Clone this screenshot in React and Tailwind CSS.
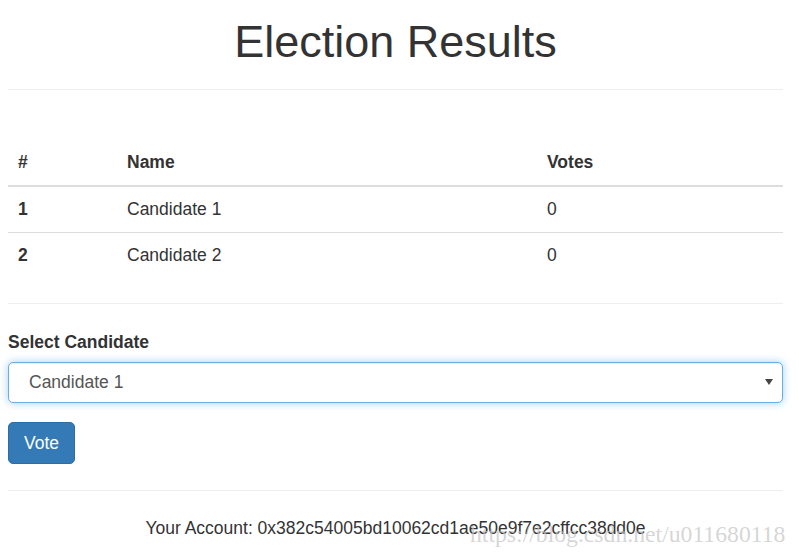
const candidates = [
  { id: 1, name: 'Candidate 1', votes: 0 },
  { id: 2, name: 'Candidate 2', votes: 0 },
];

const App = () => {
  return (
    <div className="relative min-h-[555px] w-[799px] overflow-hidden bg-white text-[#333] font-['Liberation_Sans',Arial,sans-serif] text-[17.5px] leading-[25px]">
      <div className="ml-2 w-[775px]">
        <h1 className="pt-[17px] text-center text-[45px] leading-[50px] font-normal">Election Results</h1>
        <hr className="mt-[22px] border-0 border-t border-[#eee]" />

        {/* Results table */}
        <div className="mt-[50px]">
          <div className="grid grid-cols-[109px_420px_246px] h-[47px] items-center border-b-2 border-[#ddd] font-bold">
            <div className="px-[10px]">#</div>
            <div className="px-[10px]">Name</div>
            <div className="px-[10px]">Votes</div>
          </div>
          {candidates.map((c, i) => (
            <div
              key={c.id}
              className={`grid grid-cols-[109px_420px_246px] items-center ${i > 0 ? 'h-[46px] border-t border-[#ddd]' : 'h-[45px]'}`}
            >
              <div className="px-[10px] font-bold">{c.id}</div>
              <div className="px-[10px]">{c.name}</div>
              <div className="px-[10px]">{c.votes}</div>
            </div>
          ))}
        </div>

        <hr className="mt-[25px] border-0 border-t border-[#eee]" />

        {/* Vote form */}
        <form className="mt-[26px]">
          <label className="block font-bold">Select Candidate</label>
          <div className="relative mt-[7px]">
            <select
              defaultValue="1"
              className="block h-[41px] w-full appearance-none rounded-[5px] border border-[#66afe9] bg-white pl-[20px] text-[17.5px] text-[#555] outline-none shadow-[inset_0_1px_1px_rgba(0,0,0,0.075),0_0_8px_rgba(102,175,233,0.6)]"
            >
              {candidates.map(c => (
                <option key={c.id} value={c.id}>{c.name}</option>
              ))}
            </select>
            <svg className="pointer-events-none absolute right-[10px] top-[17px]" width="8" height="6" viewBox="0 0 8 6">
              <path d="M0 0 L8 0 L4 6 Z" fill="#444" />
            </svg>
          </div>
          <button
            type="button"
            className="mt-[19px] h-[42px] rounded-[5px] border border-[#2e6da4] bg-[#337ab7] px-[15px] text-white"
          >
            Vote
          </button>
        </form>

        <hr className="mt-[26px] border-0 border-t border-[#eee]" />

        <p className="mt-[25px] text-center">Your Account: 0x382c54005bd10062cd1ae50e9f7e2cffcc38dd0e</p>
      </div>

      {/* watermark */}
      <div className="pointer-events-none absolute left-[470px] top-[520px] font-['Liberation_Serif',serif] text-[23.7px] leading-[28px] text-[#c4c4c4]/70 whitespace-nowrap">
        https://blog.csdn.net/u011680118
      </div>
    </div>
  );
};

export default App;
